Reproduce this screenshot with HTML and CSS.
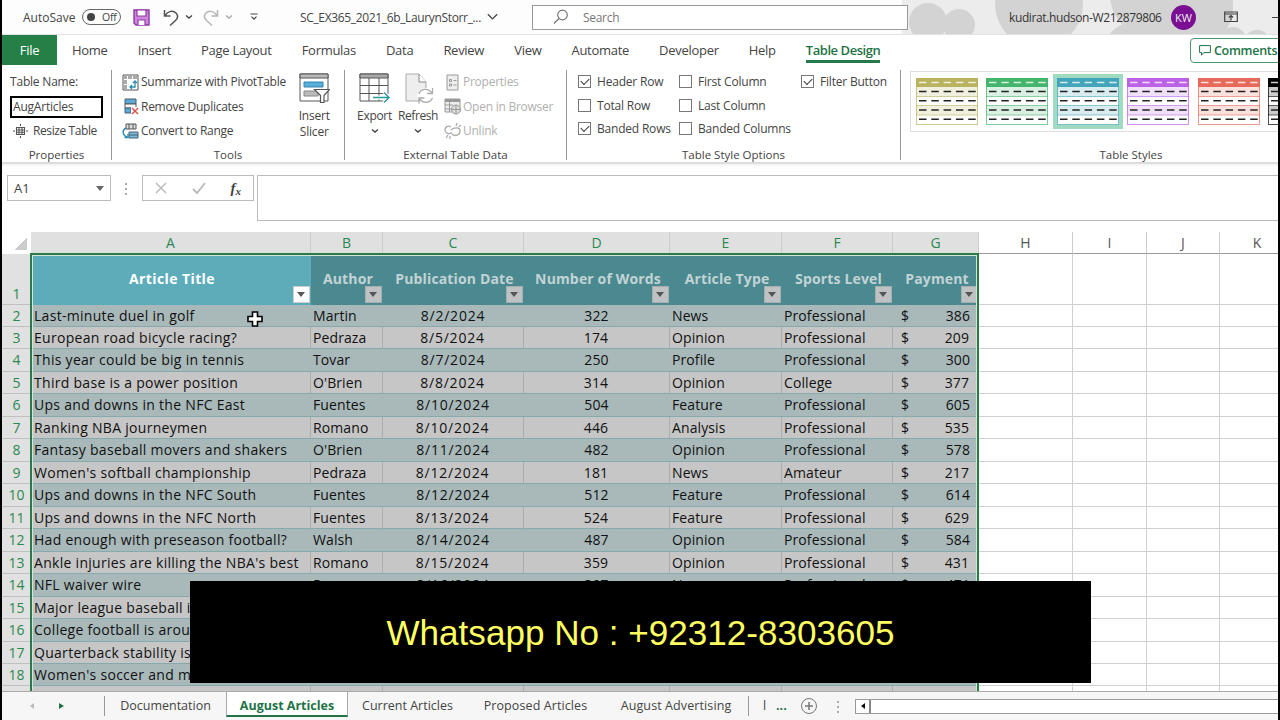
FILE: index.html
```html
<!DOCTYPE html>
<html lang="en">
<head>
    <meta charset="UTF-8">
    <title>SC_EX365_2021_6b_LaurynStorr</title>
    <link rel="stylesheet" href="styles.css">
</head>
<body>
    <svg class="defs">
        <symbol id="thumb" viewBox="0 0 62 47">
            <rect width="62" height="47" fill="#fff"/>
            <rect y="9" width="62" height="9.5" fill="currentColor" opacity=".2"/>
            <rect y="27.5" width="62" height="9.5" fill="currentColor" opacity=".2"/>
            <path d="M0 18.5h62M0 27.5h62M0 37h62" stroke="currentColor" opacity=".6"/>
            <rect x=".5" y=".5" width="61" height="46" fill="none" stroke="currentColor" opacity=".7"/>
            <rect width="62" height="9" fill="currentColor"/>
            <path d="M3 4.5h57" stroke="#fff" stroke-width="1.4" stroke-dasharray="7.5 4.8" opacity=".8"/>
            <path d="M3 13.5h57M3 22.7h57M3 32h57M3 41.2h57" stroke="#222" stroke-width="1.6" stroke-dasharray="7.5 4.8"/>
        </symbol>
        <symbol id="chev" viewBox="0 0 8 6"><path d="M1 1.5l3 2.6 3-2.6" fill="none" stroke="currentColor" stroke-width="1.3"/></symbol>
    </svg>

    <div class="titlebar">
        <svg class="clouds" viewBox="0 0 376 34">
            <rect width="376" height="34" fill="#ececec"/>
            <g fill="#d3d3d3">
                <circle cx="26" cy="22" r="19"/><circle cx="57" cy="25" r="16"/>
                <circle cx="137" cy="4" r="44"/><circle cx="250" cy="-5" r="42"/><circle cx="283" cy="6" r="48"/><path d="M208 34q10-14 40-14v14z"/>
                <circle cx="331" cy="40" r="13"/><circle cx="355" cy="44" r="14"/>
            </g>
        </svg>
        <div class="quick">
            <span class="autosave">AutoSave</span>
            <span class="toggle"><i></i>Off</span>
            <svg class="save" width="17" height="17" viewBox="0 0 17 17"><path d="M1 1h15v15H3l-2-2z" fill="#cf86dc" stroke="#8e3aa3" stroke-width="1.4"/><path d="M4 1h9v6H4zM5 16v-5h7v5" fill="#fff" stroke="#8e3aa3" stroke-width="1.2"/></svg>
            <svg class="undo" width="16" height="17" viewBox="0 0 16 17"><path d="M1.5 1v6h6M2 6.5C5 2 10 .8 13 4s1.600 5.500-.5 7.500L7 16.500" fill="none" stroke="#555" stroke-width="1.5"/></svg>
            <svg class="small-chev" width="8" height="6"><use href="#chev"/></svg>
            <svg class="redo" width="16" height="17" viewBox="0 0 16 17"><path d="M14.500 1v6h-6M14 6.500C11 2 6 .8 3 4s-1.600 5.500.5 7.500L9 16.500" fill="none" stroke="#b5b5b5" stroke-width="1.5"/></svg>
            <svg class="small-chev light" width="8" height="6"><use href="#chev"/></svg>
            <svg class="more" width="8" height="8" viewBox="0 0 8 8"><path d="M.5 1h7M1.500 3.700L4 6.200l2.500-2.500" fill="none" stroke="#444" stroke-width="1.2"/></svg>
        </div>
        <div class="filename">SC_EX365_2021_6b_LaurynStorr_...</div>
        <svg class="file-chev" width="11" height="8" viewBox="0 0 8 6"><path d="M.5 1l3.500 3.400L7.500 1" fill="none" stroke="#444"/></svg>
        <div class="search">
            <svg width="16" height="16" viewBox="0 0 16 16"><circle cx="9.500" cy="6" r="4.800" fill="none" stroke="#777" stroke-width="1.2"/><path d="M6 9.500L1 14.500" stroke="#777" stroke-width="1.300"/></svg>
            <span>Search</span>
        </div>
        <div class="user">kudirat.hudson-W212879806</div>
        <div class="avatar">KW</div>
        <svg class="ribbon-mode" width="14" height="12" viewBox="0 0 14 12"><path d="M.7 1h12.600v9.500H.7zM.7 3h12.600M7 9.500V4.500M4.800 6.500L7 4.500l2.200 2" fill="none" stroke="#444" stroke-width="1.200"/></svg>
        <span class="minimize"></span>
    </div>

    <div class="tabs">
        <div class="file">File</div>
        <span>Home</span><span>Insert</span><span>Page Layout</span><span>Formulas</span><span>Data</span><span>Review</span><span>View</span><span>Automate</span><span>Developer</span><span>Help</span><span class="current">Table Design</span>
        <div class="comments">
            <svg width="12" height="11" viewBox="0 0 12 11"><path d="M.6.6h10.800v7H5L2.500 10V7.600H.6z" fill="none" stroke="#217346"/></svg>
            <span>Comments</span>
        </div>
    </div>

    <div class="ribbon">
        <div class="group properties">
            <div class="group-body stack">
                <div>Table Name:</div>
                <div class="name-input">AugArticles</div>
                <div class="cmd"><svg width="15" height="14" viewBox="0 0 15 14"><path d="M3.500 3.500h8v7h-8zM3.500 6h8M3.500 8.300h8M6 3.500v7M9 3.500v7M7.500 0v2M7.500 12v2M0 7h2M13 7h2" fill="none" stroke="#555" stroke-width="1.100"/></svg>Resize Table</div>
            </div>
            <div class="group-name">Properties</div>
        </div>
        <div class="group tools">
            <div class="group-body">
                <div class="stack">
                    <div class="cmd"><svg width="17" height="17" viewBox="0 0 17 17"><path d="M1 1h15v15H1z" fill="#fff" stroke="#555"/><path d="M2 2h3v3H2zM6 2h4v3H6zM11 2h4v3h-4zM2 6h3v4H2zM2 11h3v4H2z" fill="#aaa"/><path d="M8 13h5V7M10 11l-2 2 2 2M11 9l2-2 2 2" fill="none" stroke="#2a8dae" stroke-width="1.300"/></svg>Summarize with PivotTable</div>
                    <div class="cmd"><svg width="17" height="17" viewBox="0 0 17 17"><path d="M3 1h11v5H3z" fill="#5aa9d9" stroke="#46606e"/><path d="M3 6h11v4H3z" fill="#fff" stroke="#555"/><path d="M3 10h6v5H3z" fill="#5aa9d9" stroke="#46606e"/><path d="M9 9h8v8H9z" fill="#fff"/><path d="M10 10l6 6M16 10l-6 6" stroke="#d9534f" stroke-width="1.500"/></svg>Remove Duplicates</div>
                    <div class="cmd"><svg width="17" height="17" viewBox="0 0 17 17"><path d="M4 1h10v5H4zM7 1v5M11 1v5" fill="#ddd" stroke="#555"/><path d="M7 9h9v6H7zM7 12h9" fill="#7cbce0" stroke="#46606e"/><path d="M4 5C0 7 0 12 5 14M2.500 14.500H6V11" fill="none" stroke="#2a8dae" stroke-width="1.400"/></svg>Convert to Range</div>
                </div>
                <div class="big slicer">
                    <svg width="31" height="31" viewBox="0 0 31 31"><path d="M1 1h28v27H1z" fill="#fff" stroke="#555"/><path d="M1 1h28v4H1z" fill="#bbb" stroke="#555"/><path d="M5 9h19v5H5z" fill="#5aaede" stroke="#3784ad"/><path d="M5 18h14v5H5z" fill="#bbb" stroke="#888"/><path d="M15.500 16.500h15l-5.500 6v7h-3.500v-7z" fill="#fff" stroke="#555" stroke-width="1.200"/></svg>
                    <span>Insert<br>Slicer</span>
                </div>
            </div>
            <div class="group-name">Tools</div>
        </div>
        <div class="group external">
            <div class="group-body">
                <div class="big export">
                    <svg width="31" height="31" viewBox="0 0 31 31"><path d="M1 1h28v27H1z" fill="#fff" stroke="#555"/><path d="M1 1h28v4H1z" fill="#aaa" stroke="#555"/><path d="M1 12.500h28M1 20.500h28M10 5v23M20 5v23" stroke="#555"/><path d="M14 24.500h15M25 19.500l5 5-5 5" fill="none" stroke="#fff" stroke-width="4"/><path d="M14 24.500h15M25 19.500l5 5-5 5" fill="none" stroke="#2a9a9a" stroke-width="1.400"/></svg>
                    <span>Export</span>
                    <svg width="8" height="6"><use href="#chev"/></svg>
                </div>
                <div class="big refresh">
                    <svg width="31" height="31" viewBox="0 0 31 31"><path d="M3 1h13l7 8v19H3z" fill="#eee" stroke="#aaa"/><path d="M16 1v8h7" fill="#fff" stroke="#888"/><circle cx="22.500" cy="23" r="8" fill="#fff"/><path d="M16 21c1-5 9-7 13-1M29.500 15v5.500H24M29.500 25c-2 5-9 6-13 1M16 30.500V25h5.500" fill="none" stroke="#aaa" stroke-width="1.300"/></svg>
                    <span>Refresh</span>
                    <svg width="8" height="6"><use href="#chev"/></svg>
                </div>
                <div class="stack disabled">
                    <div class="cmd"><svg width="17" height="17" viewBox="0 0 17 17"><path d="M3 1h11v15H3z" fill="#eee" stroke="#999"/><path d="M5.500 5.500h2v2h-2zM5.500 10h2v2h-2zM9.500 6.500h3M9.500 11h3" fill="none" stroke="#999"/></svg>Properties</div>
                    <div class="cmd"><svg width="17" height="17" viewBox="0 0 17 17"><path d="M1 1h15v13H1z" fill="#eee" stroke="#999"/><path d="M1 2.500h15" stroke="#999" stroke-width="3"/><path d="M1 7h8M1 11h7M5.500 3v11" stroke="#999"/><circle cx="12" cy="11.500" r="4.500" fill="#ddd" stroke="#999"/><path d="M7.500 11.500h9M12 7v9" stroke="#999"/></svg>Open in Browser</div>
                    <div class="cmd"><svg width="17" height="17" viewBox="0 0 17 17"><path d="M8 9.500C5 12 1 10 1 7s3-5 6-3M7 7c3-3 9-3 9 1s-5 6-8 3M12 3l1-3M14.500 4L17 2M4 12l-2 3M6 13v3" fill="none" stroke="#aaa" stroke-width="1.300"/></svg>Unlink</div>
                </div>
            </div>
            <div class="group-name">External Table Data</div>
        </div>
        <div class="group options">
            <div class="group-body">
                <div class="checks first">
                    <div><i class="box on"></i>Header Row</div>
                    <div><i class="box"></i>Total Row</div>
                    <div><i class="box on"></i>Banded Rows</div>
                </div>
                <div class="checks second">
                    <div><i class="box"></i>First Column</div>
                    <div><i class="box"></i>Last Column</div>
                    <div><i class="box"></i>Banded Columns</div>
                </div>
                <div class="checks">
                    <div><i class="box on"></i>Filter Button</div>
                </div>
            </div>
            <div class="group-name">Table Style Options</div>
        </div>
        <div class="group styles">
            <div class="gallery">
                <div class="style olive"><svg><use href="#thumb"/></svg></div>
                <div class="style green"><svg><use href="#thumb"/></svg></div>
                <div class="style teal selected"><svg><use href="#thumb"/></svg></div>
                <div class="style purple"><svg><use href="#thumb"/></svg></div>
                <div class="style red"><svg><use href="#thumb"/></svg></div>
                <div class="style black"><svg><use href="#thumb"/></svg></div>
            </div>
            <div class="group-name">Table Styles</div>
        </div>
    </div>

    <div class="formula-bar">
        <div class="cell-ref">A1<i class="arrow"></i></div>
        <div class="dots"><i></i><i></i><i></i></div>
        <div class="fx">
            <svg width="12" height="12" viewBox="0 0 12 12"><path d="M1 1l10 10M11 1L1 11" stroke="#bbb" stroke-width="1.500"/></svg>
            <svg width="14" height="12" viewBox="0 0 14 12"><path d="M1 7l4 4 8-10" fill="none" stroke="#bbb" stroke-width="2"/></svg>
            <span>f<sub>x</sub></span>
        </div>
        <div class="formula"></div>
    </div>

    <div class="sheet">
        <div class="grid" id="grid"></div>
        <div class="selection"></div>
        <svg class="cursor" width="16" height="16" viewBox="0 0 16 16"><path d="M5.500 1h5v4.500H15v5h-4.500V15h-5v-4.500H1v-5h4.500z" fill="#fff" stroke="#000" stroke-width="1.600"/></svg>
    </div>

    <div class="sheet-tabs">
        <div class="nav"><i class="prev"></i><i class="next"></i></div>
        <span class="tab doc">Documentation</span>
        <span class="tab active">August Articles</span>
        <span class="tab cur">Current Articles</span>
        <span class="tab prop">Proposed Articles</span>
        <span class="tab adv">August Advertising</span>
        <span class="cut">l</span>
        <span class="ellipsis">...</span>
        <svg class="add" width="18" height="18" viewBox="0 0 18 18"><circle cx="9" cy="9" r="7.500" fill="none" stroke="#777"/><path d="M9 5v8M5 9h8" stroke="#777" stroke-width="1.500"/></svg>
        <div class="dots"><i></i><i></i><i></i></div>
        <div class="scroll"><div class="scroll-left"><i></i></div></div>
    </div>

    <div class="banner">Whatsapp No : +92312-8303605</div>

    <script>
        const titles = ['Article Title', 'Author', 'Publication Date', 'Number of Words', 'Article Type', 'Sports Level', 'Payment'];
        const rows = [
            ['Last-minute duel in golf', 'Martin', '8/2/2024', 322, 'News', 'Professional', 386],
            ['European road bicycle racing?', 'Pedraza', '8/5/2024', 174, 'Opinion', 'Professional', 209],
            ['This year could be big in tennis', 'Tovar', '8/7/2024', 250, 'Profile', 'Professional', 300],
            ['Third base is a power position', "O'Brien", '8/8/2024', 314, 'Opinion', 'College', 377],
            ['Ups and downs in the NFC East', 'Fuentes', '8/10/2024', 504, 'Feature', 'Professional', 605],
            ['Ranking NBA journeymen', 'Romano', '8/10/2024', 446, 'Analysis', 'Professional', 535],
            ['Fantasy baseball movers and shakers', "O'Brien", '8/11/2024', 482, 'Opinion', 'Professional', 578],
            ["Women's softball championship", 'Pedraza', '8/12/2024', 181, 'News', 'Amateur', 217],
            ['Ups and downs in the NFC South', 'Fuentes', '8/12/2024', 512, 'Feature', 'Professional', 614],
            ['Ups and downs in the NFC North', 'Fuentes', '8/13/2024', 524, 'Feature', 'Professional', 629],
            ['Had enough with preseason football?', 'Walsh', '8/14/2024', 487, 'Opinion', 'Professional', 584],
            ["Ankle injuries are killing the NBA's best", 'Romano', '8/15/2024', 359, 'Opinion', 'Professional', 431],
            ['NFL waiver wire', 'Romano', '8/16/2024', 397, 'News', 'Professional', 471],
            ['Major league baseball in'],
            ['College football is around'],
            ['Quarterback stability is'],
            ["Women's soccer and more"],
            []
        ];
        const grid = document.getElementById('grid');

        function add(cls, html) {
            const cell = document.createElement('div');
            cell.className = cls;
            cell.innerHTML = html === undefined ? '' : html;
            grid.appendChild(cell);
        }

        // column letters
        add('corner');
        'ABCDEFGHIJK'.split('').forEach((c, i) => add(i < 7 ? 'letter picked' : 'letter', c));

        // table header
        add('num first', 1);
        titles.forEach((t, i) => add('head' + (i === 0 ? ' current' : ''), `<span>${t}</span><i class="filter"></i>`));
        for (let i = 0; i < 4; i++) add('blank');

        rows.forEach((row, r) => {
            add('num', r < 17 ? r + 2 : '');
            for (let c = 0; c < 7; c++) {
                let cls = 'cell ' + (r % 2 ? 'plain' : 'band');
                let value = row[c];
                if (c === 0) cls += ' title';
                if (c === 2) cls += ' date';
                if (c === 2 || c === 3) cls += ' center';
                if (c === 6 && value) {
                    cls += ' money';
                    value = `<span>$</span><span>${value}</span>`;
                }
                add(cls, value);
            }
            for (let i = 0; i < 4; i++) add('blank');
        });
    </script>
</body>
</html>
```
FILE: styles.css
```css
* {
    box-sizing: border-box;
}

body {
    margin: 0;
    width: 1280px;
    height: 720px;
    overflow: hidden;
    position: relative;
    display: flex;
    flex-direction: column;
    border-left: 2px solid #000;
    border-right: 2px solid #000;
    background: #fff;
    color: #444;
    font-family: "Open Sans", "Noto Sans", sans-serif;
    font-size: 12px;
    white-space: nowrap;
}

.defs {
    position: absolute;
    width: 0;
    height: 0;
}

svg {
    flex: none;
}

/* title bar */
.titlebar {
    position: relative;
    flex: none;
    height: 35px;
    display: flex;
    align-items: center;
    background: #fdfdfd;
    border-bottom: 1px solid #e2e2e2;
}

.titlebar > * {
    position: relative;
    flex: none;
}

.titlebar .clouds {
    position: absolute;
    right: 0;
    top: 0;
    width: 376px;
    height: 34px;
}

.quick {
    display: flex;
    align-items: center;
    width: 298px;
    padding-left: 21px;
}

.autosave {
    width: 59px;
}

.toggle {
    display: flex;
    align-items: center;
    gap: 7px;
    width: 39px;
    height: 16px;
    padding-left: 4px;
    border: 1px solid #666;
    border-radius: 8px;
    font-size: 10.500px;
    letter-spacing: -0.2px;
}

.toggle i {
    width: 8px;
    height: 8px;
    border-radius: 50%;
    background: #444;
}

.save {
    margin-left: 12px;
}

.undo {
    margin-left: 13px;
}

.small-chev {
    margin-left: 6px;
}

.redo {
    margin-left: 10px;
}

.light {
    color: #aaa;
}

.more {
    margin-left: 17px;
}

.filename {
    width: 187px;
    letter-spacing: -0.35px;
}

.file-chev {
    margin-right: 34px;
}

.search {
    width: 376px;
    height: 25px;
    display: flex;
    align-items: center;
    gap: 14px;
    padding-left: 20px;
    border: 1px solid #999;
    background: #fff;
    color: #777;
    letter-spacing: -0.3px;
}

.user {
    margin-left: 101px;
    width: 162px;
    color: #333;
    letter-spacing: -0.38px;
}

.avatar {
    width: 25px;
    height: 25px;
    line-height: 25px;
    border-radius: 50%;
    background: #7b0f93;
    color: #eee;
    text-align: center;
    font-size: 11px;
}

.ribbon-mode {
    margin-left: 28px;
}

.minimize {
    margin-left: 34px;
    width: 6px;
    height: 1px;
    background: #444;
}

/* ribbon tabs */
.tabs {
    flex: none;
    height: 31px;
    display: flex;
    gap: 30px;
    line-height: 30px;
    font-size: 13px;
    letter-spacing: -0.28px;
}

.file {
    width: 55px;
    height: 30px;
    margin-right: -15px;
    background: #258048;
    color: #fff;
    text-align: center;
}

.tabs .current {
    height: 28px;
    border-bottom: 3px solid #257a4a;
    color: #217346;
    font-weight: 600;
    letter-spacing: -0.45px;
}

.comments {
    flex: none;
    width: 100px;
    height: 25px;
    margin: 3px 0 0 auto;
    margin-right: -12px;
    line-height: 23px;
    padding-left: 8px;
    border: 1px solid #4f9470;
    border-radius: 4px;
    color: #217346;
    font-size: 12.500px;
    font-weight: 600;
}

.comments svg {
    vertical-align: -1px;
}

/* ribbon */
.ribbon {
    flex: none;
    height: 98px;
    display: flex;
    border-bottom: 2px solid #dcdcdc;
    letter-spacing: -0.2px;
}

.group {
    flex: none;
    height: 90px;
    margin-top: 4px;
    display: flex;
    flex-direction: column;
    border-right: 1px solid #999;
}

.properties {
    width: 110px;
}

.tools {
    width: 233px;
}

.external {
    width: 222px;
}

.options {
    width: 334px;
}

.styles {
    width: 460px;
    border: 0;
}

.group-body {
    display: flex;
    flex: none;
    height: 74px;
}

.group-name {
    margin-top: 3px;
    line-height: 16px;
    text-align: center;
    font-size: 11.5px;
    letter-spacing: 0;
}

.properties .group-body {
    padding-left: 8px;
}

.stack {
    display: flex;
    flex-direction: column;
    line-height: 24.5px;
}

.name-input {
    width: 93px;
    height: 22px;
    margin: 1px 0 1.500px;
    padding-left: 1px;
    line-height: 17px;
    border: 2px solid #000;
}

.cmd {
    display: flex;
    align-items: center;
    gap: 2px;
    height: 24.5px;
}

.properties .cmd {
    gap: 5px;
    padding-left: 3px;
    letter-spacing: -0.4px;
}

.tools .stack {
    width: 171px;
    padding-left: 10px;
    letter-spacing: -0.26px;
}

.big {
    display: flex;
    flex-direction: column;
    align-items: center;
    padding-top: 3px;
    text-align: center;
    line-height: 16px;
}

.big span {
    margin-top: 4px;
}

.big span + svg {
    margin-top: 4px;
}

.slicer {
    width: 64px;
    margin-left: 1.500px;
}

.export {
    width: 43px;
    margin-left: 8px;
    letter-spacing: -0.3px;
}

.refresh {
    width: 44px;
    letter-spacing: -0.4px;
}

.disabled {
    margin-left: 4px;
    color: #b0b0b0;
    letter-spacing: -0.25px;
}

.checks {
    padding-left: 11px;
}

.checks.first {
    width: 112px;
}

.checks.second {
    width: 122px;
    padding-left: 0;
}

.checks.second + .checks {
    padding-left: 0;
}

.checks div {
    display: flex;
    align-items: center;
    height: 23.5px;
}

.box {
    position: relative;
    width: 13px;
    height: 13px;
    margin-right: 6px;
    border: 1px solid #777;
}

.box.on::after {
    content: "";
    position: absolute;
    left: 2px;
    top: 2px;
    width: 7px;
    height: 4px;
    border-left: 1.500px solid #333;
    border-bottom: 1.500px solid #333;
    transform: rotate(-45deg);
}

.gallery {
    flex: none;
    width: 451px;
    height: 61px;
    margin: 1px 0 12px 9px;
    padding: 2px 0 0 1px;
    display: flex;
    overflow: hidden;
    border: 1px solid #ddd;
    border-right: 0;
}

.style {
    flex: none;
    width: 70.4px;
    height: 55px;
    padding: 4px;
}

.style svg {
    display: block;
    width: 62px;
    height: 47px;
}

.olive {
    color: #b9b25e;
}

.green {
    color: #44b56c;
}

.teal {
    color: #43a5b9;
}

.purple {
    color: #bb62e6;
}

.red {
    color: #e6695a;
}

.black {
    color: #000;
}

.style.selected {
    background: #a0dbc1;
}

/* formula bar */
.formula-bar {
    flex: none;
    height: 68px;
    display: flex;
    padding: 9px 0 0 5px;
    border-top: 2px solid #f5f5f5;
}

.cell-ref {
    width: 104px;
    height: 26px;
    display: flex;
    align-items: center;
    justify-content: space-between;
    padding: 0 6px;
    border: 1px solid #bbb;
    font-size: 13px;
}

.arrow {
    border: 4px solid transparent;
    border-top: 5px solid #666;
    border-bottom: 0;
}

.dots {
    display: flex;
    flex-direction: column;
    justify-content: center;
    gap: 3px;
    width: 2px;
    height: 27px;
}

.dots i {
    width: 2px;
    height: 2px;
    background: #aaa;
}

.formula-bar .dots {
    margin: 0 15px 0 14px;
}

.fx {
    width: 112px;
    height: 26px;
    display: flex;
    align-items: center;
    justify-content: space-between;
    padding: 0 12px;
    border: 1px solid #bbb;
    font: italic bold 15px "Liberation Serif", serif;
}

.fx sub {
    font-size: 11px;
    vertical-align: -2px;
}

.formula {
    flex: 1;
    height: 46px;
    margin-left: 3px;
    border: 1px solid #bbb;
    border-right: 0;
}

/* sheet */
.sheet {
    position: relative;
    flex: none;
    height: 459px;
    overflow: hidden;
}

.grid {
    display: grid;
    grid-template-columns: 29px 280px 72px 141px 146px 112px 111px 86px 94px 74px 73px 75px;
    grid-template-rows: 21.500px 51px;
    grid-auto-rows: 22.47px;
    font-size: 14px;
    color: #111;
}

.corner {
    background: linear-gradient(135deg, transparent 50%, #ccc 50%) 12px 5px / 13px 13px no-repeat;
}

.letter {
    line-height: 21px;
    text-align: center;
    color: #555;
    border-right: 1px solid #ccc;
    border-bottom: 1px solid #999;
}

.letter.picked {
    background: #e0e0e0;
    color: #2b8852;
}

.num {
    background: #e1e1e1;
    border-bottom: 1px solid #c0c0c0;
    line-height: 22px;
    text-align: center;
    color: #2b8852;
}

.num.first {
    padding-top: 29px;
}

.head {
    position: relative;
    padding-left: 2px;
    background: #4a8990;
    color: #c3d3d5;
    line-height: 50px;
    text-align: center;
    font-weight: 700;
    letter-spacing: 0.15px;
}

.head.current {
    background: #5cacba;
    color: #fff;
    letter-spacing: 0.4px;
}

.filter {
    position: absolute;
    right: 1px;
    bottom: 2px;
    width: 17px;
    height: 17px;
    background: #bfc2c3;
    border: 1px solid #a5aeb0;
}

.current .filter {
    background: #fff;
    border-color: #ccc;
}

.filter::after {
    content: "";
    position: absolute;
    left: 3px;
    top: 5px;
    border: 4px solid transparent;
    border-top: 5px solid #555;
    border-bottom: 0;
}

.cell {
    padding: 0 3px 0 2px;
    line-height: 22.500px;
    border-bottom: 1px solid #86a9ad;
    overflow: hidden;
    letter-spacing: 0.1px;
}

.cell.title {
    padding-left: 3px;
    letter-spacing: 0.29px;
}

.cell.date {
    letter-spacing: 0.8px;
}

.cell.band {
    background: #a9b9ba;
}

.cell.plain {
    background: #c6c6c6;
    border-right: 1px solid #a8adad;
}

.cell.center {
    text-align: center;
}

.cell.money {
    display: flex;
    justify-content: space-between;
    padding: 0 9px 0 8px;
}

.blank {
    border-right: 1px solid #d0d0d0;
    border-bottom: 1px solid #d0d0d0;
}

.selection {
    position: absolute;
    left: 28px;
    top: 20.500px;
    width: 949px;
    height: 500px;
    border: 2px solid #2b7a4c;
    box-shadow: inset 0 0 0 1px #cfe6d8;
}

.cursor {
    position: absolute;
    left: 245px;
    top: 79px;
}

/* sheet tabs */
.sheet-tabs {
    flex: none;
    height: 29px;
    display: flex;
    background: #f6f6f6;
    border-top: 1px solid #aaa;
    line-height: 27px;
    font-size: 12.500px;
}

.nav {
    width: 103px;
    height: 20px;
    margin-top: 4px;
    display: flex;
    align-items: center;
    gap: 25px;
    padding-left: 28px;
    border-right: 1px solid #999;
}

.nav i {
    border: 3px solid transparent;
}

.nav .prev {
    border-right: 4px solid #bbb;
    border-left: 0;
}

.nav .next {
    border-left: 5px solid #217346;
    border-right: 0;
}

.tab {
    flex: none;
    text-align: center;
}

.doc {
    width: 121px;
}

.active {
    width: 122px;
    height: 25px;
    background: #fff;
    border: 1px solid #aaa;
    border-top: 0;
    border-bottom: 2px solid #217346;
    color: #217346;
    font-weight: 700;
}

.cur {
    width: 119px;
}

.prop {
    width: 137px;
}

.adv {
    width: 144px;
}

.prop,
.adv {
    letter-spacing: 0.1px;
}

.cut {
    width: 28px;
    padding-left: 14px;
    border-left: 1px solid #999;
    height: 20px;
    margin-top: 4px;
    line-height: 19px;
}

.ellipsis {
    width: 24px;
    color: #217346;
    font-weight: 700;
}

.add {
    margin-top: 5px;
}

.sheet-tabs .dots {
    margin: 1px 16px 0 19px;
}

.scroll {
    flex: 1;
    height: 15px;
    margin-top: 7px;
    border: 1px solid #999;
    border-right: 0;
    background: #fff;
}

.scroll-left {
    width: 15px;
    height: 13px;
    padding: 3px 0 0 5px;
    border-right: 2px solid #888;
}

.scroll-left i {
    display: block;
    width: 0;
    border: 3.500px solid transparent;
    border-right: 4px solid #111;
    border-left: 0;
}

.banner {
    position: absolute;
    left: 188px;
    top: 581px;
    width: 901px;
    height: 102px;
    background: #000;
    color: #ffff62;
    font: 35.100px/103px "Liberation Sans", Arial, sans-serif;
    text-align: center;
}
```
